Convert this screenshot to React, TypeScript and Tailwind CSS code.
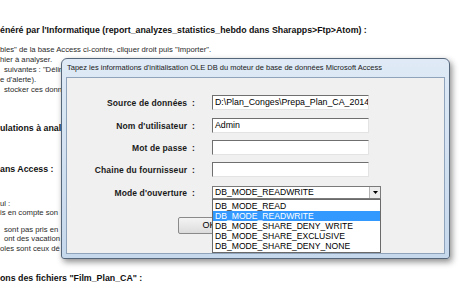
import React from "react";

const docFont = { fontFamily: '"Liberation Sans", Arial, sans-serif' };

const fields = [
  { label: "Source de données", value: "D:\\Plan_Conges\\Prepa_Plan_CA_2014", mt: "mt-0" },
  { label: "Nom d'utilisateur", value: "Admin", mt: "mt-[8px]" },
  { label: "Mot de passe", value: "", mt: "mt-[7px]" },
  { label: "Chaine du fournisseur", value: "", mt: "mt-[7px]" },
];

const modes = [
  "DB_MODE_READ",
  "DB_MODE_READWRITE",
  "DB_MODE_SHARE_DENY_WRITE",
  "DB_MODE_SHARE_EXCLUSIVE",
  "DB_MODE_SHARE_DENY_NONE",
];

export default function App() {
  return (
    <div className="relative w-[474px] h-[289px] overflow-hidden bg-white" style={docFont}>
      {/* Word document behind the dialog */}
      <div className="flex flex-col text-[7.7px] leading-[10px] text-[#2a2a2a] whitespace-nowrap">
        <div className="mt-[25px] text-[8.8px] font-bold text-[#111]">
          énéré par l'Informatique (report_analyzes_statistics_hebdo dans Sharapps&gt;Ftp&gt;Atom) :
        </div>
        <div className="mt-[10px]">bles" de la base Access ci-contre, cliquer droit puis "Importer".</div>
        <div>hier à analyser.</div>
        <div className="pl-[4px]">suivantes : "Délim</div>
        <div>e d'alerte).</div>
        <div className="pl-[4px]">stocker ces donn</div>
        <div className="mt-[28px] text-[8.8px] font-bold text-[#111]">ulations à anal</div>
        <div className="mt-[31px] text-[8.8px] font-bold text-[#111]">ans Access :</div>
        <div className="mt-[25px]">ul :</div>
        <div className="-mt-[1px]">is en compte son</div>
        <div className="mt-[7px] pl-[4px]">sont pas pris en</div>
        <div className="-mt-[1px] pl-[4px]">ont des vacation</div>
        <div>oles sont ceux dé</div>
        <div className="mt-[19px] text-[8.8px] font-bold text-[#111]">ons des fichiers "Film_Plan_CA" :</div>
      </div>

      {/* OLE DB dialog window */}
      <div className="absolute left-[61px] top-[58px] w-[389px] h-[201px] flex flex-col rounded-t-[6px] rounded-b-[3px] border border-[#55657a] bg-gradient-to-b from-[#dfeaf6] to-[#c6d8ec] shadow-[2px_3px_6px_rgba(0,0,0,0.45)]">
        <div className="h-[18px] pl-[5px] flex items-center text-[7.5px] text-[#1a1a1a] whitespace-nowrap">
          Tapez les informations d'initialisation OLE DB du moteur de base de données Microsoft Access
        </div>
        <div className="mx-[4px] mb-[4px] flex-1 flex flex-col pt-[17px] bg-[#f0f0f0] border border-[#8fa3ba]">
          {fields.map((f) => (
            <div key={f.label} className={`flex items-center h-[15px] ${f.mt}`}>
              <div className="w-[128px] text-right text-[8.5px] font-bold text-[#1a1a1a] tracking-[0.1px] whitespace-nowrap pt-[2px]">
                {f.label}&nbsp;&nbsp;:
              </div>
              <div className="ml-[17px] w-[157px] h-[15px] bg-white border-t border-l border-[#6f6f6f] border-b border-r border-b-[#e3e3e3] border-r-[#e3e3e3] flex items-center pl-[2px] text-[8.8px] text-black whitespace-nowrap overflow-hidden">
                {f.value}
              </div>
            </div>
          ))}

          <div className="flex items-center h-[13px] mt-[9px]">
            <div className="w-[128px] text-right text-[8.5px] font-bold text-[#1a1a1a] tracking-[0.1px] whitespace-nowrap pt-[2px]">
              Mode d'ouverture&nbsp;&nbsp;:
            </div>
            <div className="relative ml-[17px] w-[169px] h-[13px] z-10">
              <div className="h-full flex items-center bg-white border border-[#7a7a7a]">
                <span className="flex-1 pl-[2px] text-[8.6px] text-black leading-none whitespace-nowrap">DB_MODE_READWRITE</span>
                <span className="w-[11px] h-full flex items-center justify-center bg-[#ececec] border-l border-[#b5b5b5]">
                  <svg width="5" height="3" viewBox="0 0 5 3">
                    <path d="M0 0h5L2.5 3z" fill="#000" />
                  </svg>
                </span>
              </div>
              <div className="absolute left-0 top-full w-full bg-white border border-[#6a6a6a] py-[1px]">
                {modes.map((m, i) => (
                  <div
                    key={m}
                    className={`h-[10px] pl-[2px] text-[8.6px] leading-[10px] whitespace-nowrap ${
                      i === 1 ? "bg-[#3399ff] text-white" : "text-black"
                    }`}
                  >
                    {m}
                  </div>
                ))}
              </div>
            </div>
          </div>

          <div className="mt-[18px] ml-[111px] w-[62px] h-[17px] flex items-center justify-center rounded-[2px] border border-[#8a8a8a] bg-gradient-to-b from-[#f4f4f4] to-[#dcdcdc] text-[9px] text-black">
            OK
          </div>
        </div>
      </div>
    </div>
  );
}
